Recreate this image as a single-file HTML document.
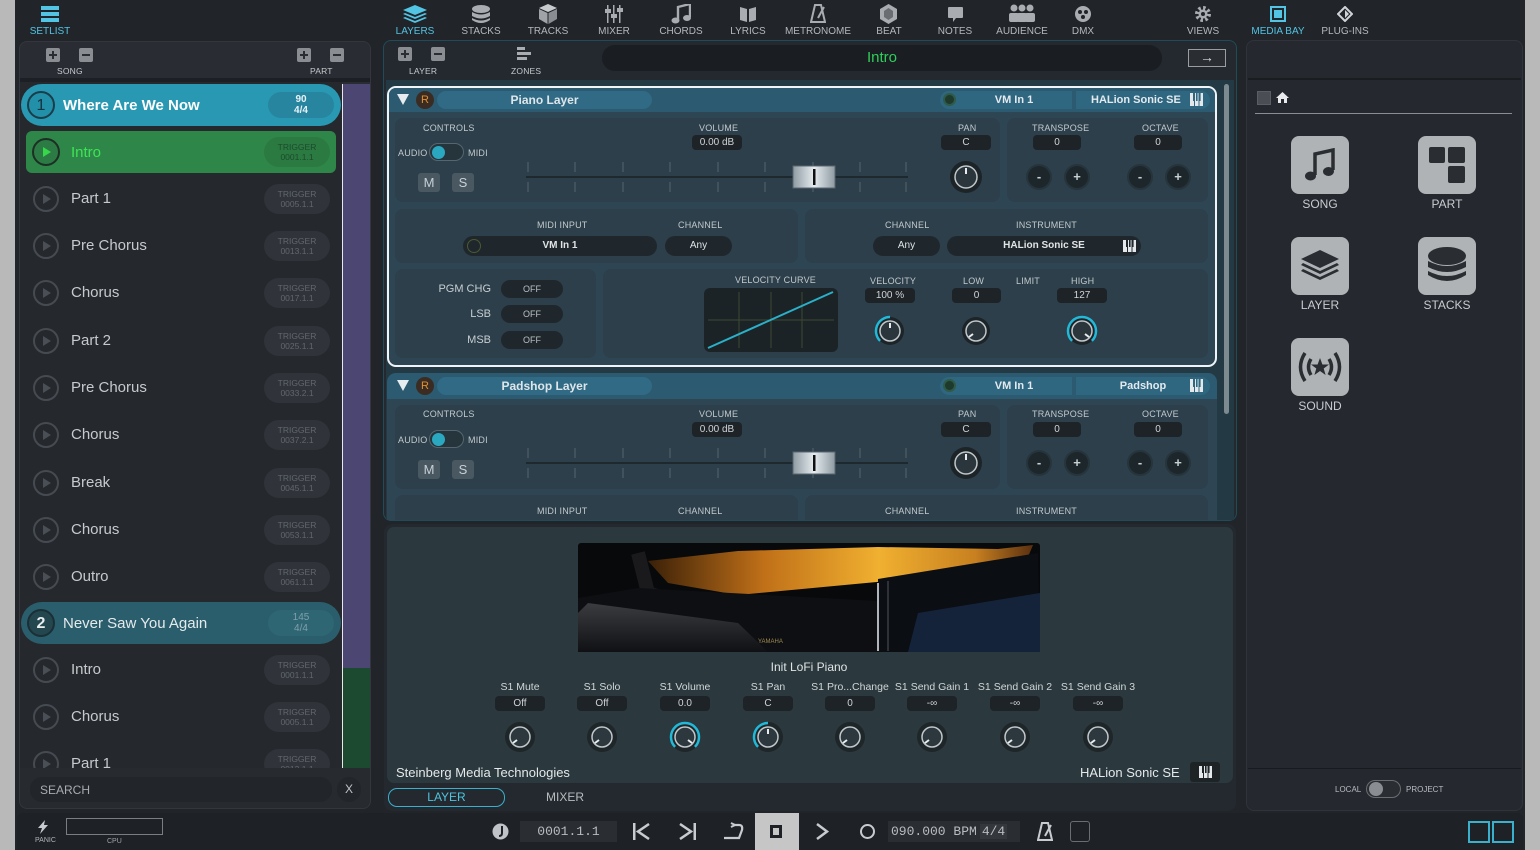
<!DOCTYPE html>
<html><head><meta charset="utf-8"><style>
*{margin:0;padding:0;box-sizing:border-box}
body{width:1540px;height:850px;overflow:hidden;background:#b9b9b9;font-family:"Liberation Sans",sans-serif;position:relative;color:#c8ccd0}
.a{position:absolute}
.c{position:absolute;text-align:center;white-space:nowrap}
.lbl{font-size:9px;color:#c3c9cd;letter-spacing:.2px}
.tb{font-size:10px;color:#b4b8bc;transform:translateX(-50%)}
.vb{position:absolute;background:#1d2327;border-radius:4px;font-size:10px;color:#d0d4d8;text-align:center}
.pill{position:absolute;background:#1f272c;border-radius:12px;font-size:10px;color:#e0e4e6;text-align:center}
.sec{position:absolute;background:#2c3f4b;border-radius:8px}
.row{position:absolute;left:26px;width:310px;height:42px}
.play{position:absolute;left:7px;top:8px;width:26px;height:26px;border:2px solid #464b51;border-radius:50%}
.play:after{content:"";position:absolute;left:8px;top:6px;border-left:8px solid #4a4f55;border-top:5px solid transparent;border-bottom:5px solid transparent}
.rn{position:absolute;left:45px;top:12px;font-size:15px;color:#c6cacd}
.trg{position:absolute;left:238px;top:6px;width:66px;height:30px;background:#30343a;border-radius:15px;font-size:8.5px;color:#62676d;text-align:center;line-height:10px;padding-top:5px}
.pm{position:absolute;width:22px;height:22px;border-radius:50%;background:#1d262b;box-shadow:0 0 0 2px #26343c;color:#c8d0d4;font-size:13px;text-align:center;line-height:21px;font-weight:bold}
.ms{position:absolute;width:22px;height:19px;background:#4a5862;border-radius:3px;color:#c8d0d6;font-size:13px;text-align:center;line-height:19px}
</style></head><body>

<div class="a" style="left:15px;top:0;width:1510px;height:850px;background:#212429"></div>

<!-- ================= LEFT PANEL ================= -->
<svg class="a" style="left:41px;top:6px" width="18" height="16"><rect x="0" y="0" width="18" height="4" fill="#52c4e4"/><rect x="0" y="6" width="18" height="4" fill="#52c4e4"/><rect x="0" y="12" width="18" height="4" fill="#52c4e4"/></svg>
<div class="c tb" style="left:50px;top:26px;color:#52c4e4">SETLIST</div>
<div class="a" style="left:19px;top:41px;width:352px;height:768px;background:#292c32;border-radius:8px;border:1px solid #33373d"></div>
<div class="a" style="left:20px;top:78px;width:350px;height:4px;background:#1c1f23"></div>
<svg class="a" style="left:46px;top:48px" width="48" height="14"><rect x="0" y="0" width="14" height="14" rx="2" fill="#8a8d91"/><rect x="3" y="6" width="8" height="2" fill="#2a2d31"/><rect x="6" y="3" width="2" height="8" fill="#2a2d31"/><rect x="33" y="0" width="14" height="14" rx="2" fill="#8a8d91"/><rect x="36" y="6" width="8" height="2" fill="#2a2d31"/></svg>
<div class="c lbl" style="left:57px;top:66px;font-size:8.5px">SONG</div>
<svg class="a" style="left:297px;top:48px" width="48" height="14"><rect x="0" y="0" width="14" height="14" rx="2" fill="#8a8d91"/><rect x="3" y="6" width="8" height="2" fill="#2a2d31"/><rect x="6" y="3" width="2" height="8" fill="#2a2d31"/><rect x="33" y="0" width="14" height="14" rx="2" fill="#8a8d91"/><rect x="36" y="6" width="8" height="2" fill="#2a2d31"/></svg>
<div class="c lbl" style="left:310px;top:66px;font-size:8.5px">PART</div>

<div class="a" style="left:20px;top:82px;width:322px;height:686px;background:#25282d"></div>
<div class="a" style="left:342px;top:84px;width:1px;height:684px;background:#e8e8e8"></div>
<div class="a" style="left:343px;top:84px;width:27px;height:584px;background:#4b4772"></div>
<div class="a" style="left:343px;top:668px;width:27px;height:100px;background:#1b4a30"></div>

<div class="a" style="left:21px;top:84px;width:320px;height:42px;background:#2898b3;border-radius:21px"></div>
<div class="a" style="left:27px;top:91px;width:28px;height:28px;border-radius:50%;border:2px solid #1b3d4a;background:#2390aa;color:#16323d;font-size:16px;text-align:center;line-height:25px">1</div>
<div class="a" style="left:63px;top:97px;font-size:15px;font-weight:bold;color:#fff">Where Are We Now</div>
<div class="a" style="left:268px;top:92px;width:66px;height:26px;background:#2785a0;border-radius:13px;font-size:10px;color:#e8f2f6;text-align:center;line-height:11px;padding-top:2px;font-weight:bold">90<br>4/4</div>

<div class="a" style="left:26px;top:131px;width:310px;height:42px;background:#2e8748;border-radius:6px"></div>
<div class="a" style="left:32px;top:138px;width:28px;height:28px;border-radius:50%;border:2px solid #1d2f24;background:#2c7a44"></div>
<div class="a" style="left:43px;top:147px;border-left:8px solid #36d84a;border-top:5px solid transparent;border-bottom:5px solid transparent"></div>
<div class="a" style="left:71px;top:144px;font-size:15px;color:#3ee454">Intro</div>
<div class="a" style="left:264px;top:137px;width:66px;height:30px;background:#2a7a42;border-radius:15px;font-size:8.5px;color:#1e4a2c;text-align:center;line-height:10px;padding-top:5px">TRIGGER<br>0001.1.1</div>

<div class="row" style="top:178px"><div class="play"></div><div class="rn">Part 1</div><div class="trg">TRIGGER<br>0005.1.1</div></div>
<div class="row" style="top:225px"><div class="play"></div><div class="rn">Pre Chorus</div><div class="trg">TRIGGER<br>0013.1.1</div></div>
<div class="row" style="top:272px"><div class="play"></div><div class="rn">Chorus</div><div class="trg">TRIGGER<br>0017.1.1</div></div>
<div class="row" style="top:320px"><div class="play"></div><div class="rn">Part 2</div><div class="trg">TRIGGER<br>0025.1.1</div></div>
<div class="row" style="top:367px"><div class="play"></div><div class="rn">Pre Chorus</div><div class="trg">TRIGGER<br>0033.2.1</div></div>
<div class="row" style="top:414px"><div class="play"></div><div class="rn">Chorus</div><div class="trg">TRIGGER<br>0037.2.1</div></div>
<div class="row" style="top:462px"><div class="play"></div><div class="rn">Break</div><div class="trg">TRIGGER<br>0045.1.1</div></div>
<div class="row" style="top:509px"><div class="play"></div><div class="rn">Chorus</div><div class="trg">TRIGGER<br>0053.1.1</div></div>
<div class="row" style="top:556px"><div class="play"></div><div class="rn">Outro</div><div class="trg">TRIGGER<br>0061.1.1</div></div>

<div class="a" style="left:21px;top:602px;width:320px;height:42px;background:#2b5e6c;border-radius:21px"></div>
<div class="a" style="left:27px;top:609px;width:28px;height:28px;border-radius:50%;border:2px solid #1b2f36;background:#24464f;color:#e8eef0;font-size:16px;text-align:center;line-height:25px;font-weight:bold">2</div>
<div class="a" style="left:63px;top:615px;font-size:15px;color:#e4eaec">Never Saw You Again</div>
<div class="a" style="left:268px;top:610px;width:66px;height:26px;background:#2f6674;border-radius:13px;font-size:10px;color:#7fa0aa;text-align:center;line-height:11px;padding-top:2px">145<br>4/4</div>

<div class="row" style="top:649px"><div class="play"></div><div class="rn">Intro</div><div class="trg">TRIGGER<br>0001.1.1</div></div>
<div class="row" style="top:696px"><div class="play"></div><div class="rn">Chorus</div><div class="trg">TRIGGER<br>0005.1.1</div></div>
<div class="a" style="left:26px;top:743px;width:310px;height:25px;overflow:hidden"><div class="row" style="left:0;top:0"><div class="play"></div><div class="rn">Part 1</div><div class="trg">TRIGGER<br>0013.1.1</div></div></div>

<div class="a" style="left:20px;top:768px;width:350px;height:40px;background:#272a2f;border-radius:0 0 8px 8px"></div>
<div class="a" style="left:30px;top:777px;width:302px;height:25px;background:#22252a;border-radius:12px;font-size:12px;color:#a8acb0;padding:6px 0 0 10px">SEARCH</div>
<div class="a" style="left:337px;top:777px;width:24px;height:25px;background:#22252a;border-radius:12px;font-size:12px;color:#c0c4c8;text-align:center;line-height:25px">X</div>

<!-- ================= TOP TOOLBAR ================= -->
<svg class="a" style="left:403px;top:5px" width="24" height="18"><path d="M12 0 L24 5 L12 10 L0 5Z" fill="#52c4e4"/><path d="M2 8 L12 12 L22 8 L24 9 L12 14 L0 9Z" fill="#52c4e4"/><path d="M2 12 L12 16 L22 12 L24 13 L12 18 L0 13Z" fill="#52c4e4"/></svg>
<div class="c tb" style="left:415px;top:26px;color:#52c4e4">LAYERS</div>
<svg class="a" style="left:472px;top:5px" width="18" height="19"><ellipse cx="9" cy="4" rx="9" ry="4" fill="#a9adb1"/><path d="M0 7 Q9 12 18 7 V11 Q9 16 0 11Z" fill="#a9adb1"/><path d="M0 13 Q9 18 18 13 V15 Q9 21 0 15Z" fill="#a9adb1"/></svg>
<div class="c tb" style="left:481px;top:26px">STACKS</div>
<svg class="a" style="left:539px;top:4px" width="18" height="20"><path d="M9 0 L18 4 L9 8 L0 4Z" fill="#c8cbce"/><path d="M0 5 L8.5 9 V20 L0 15Z" fill="#a0a4a8"/><path d="M18 5 L9.5 9 V20 L18 15Z" fill="#8a8e92"/></svg>
<div class="c tb" style="left:548px;top:26px">TRACKS</div>
<svg class="a" style="left:605px;top:5px" width="18" height="18"><g fill="#a9adb1"><rect x="2" y="0" width="1.5" height="18"/><rect x="8" y="0" width="1.5" height="18"/><rect x="14" y="0" width="1.5" height="18"/><rect x="0" y="4" width="6" height="4"/><rect x="6" y="9" width="6" height="4"/><rect x="12" y="3" width="6" height="4"/></g></svg>
<div class="c tb" style="left:614px;top:26px">MIXER</div>
<svg class="a" style="left:671px;top:4px" width="20" height="20"><path d="M7 16 V3 L19 0 V13" stroke="#a9adb1" stroke-width="2.4" fill="none"/><ellipse cx="4.5" cy="16.5" rx="4" ry="3" fill="#a9adb1"/><ellipse cx="16" cy="14" rx="4" ry="3" fill="#a9adb1"/></svg>
<div class="c tb" style="left:681px;top:26px">CHORDS</div>
<svg class="a" style="left:740px;top:6px" width="16" height="16"><path d="M0 1 L7 3 V16 L0 14Z M9 3 L16 1 V14 L9 16Z" fill="#a9adb1"/></svg>
<div class="c tb" style="left:748px;top:26px">LYRICS</div>
<svg class="a" style="left:810px;top:4px" width="16" height="19"><path d="M5 1 H11 L15 18 H1Z" stroke="#a9adb1" stroke-width="2" fill="none"/><path d="M8 14 L14 3" stroke="#a9adb1" stroke-width="2"/></svg>
<div class="c tb" style="left:818px;top:26px">METRONOME</div>
<svg class="a" style="left:880px;top:4px" width="17" height="20"><path d="M8.5 0 L17 5 V15 L8.5 20 L0 15 V5Z" fill="#a9adb1"/><path d="M8.5 4 L13 7 V13 L8.5 16 L4 13 V7Z" fill="#6a6e72"/></svg>
<div class="c tb" style="left:889px;top:26px">BEAT</div>
<svg class="a" style="left:948px;top:7px" width="15" height="15"><path d="M0 1 Q0 0 1 0 H14 Q15 0 15 1 V10 Q15 11 14 11 H8 L5 15 V11 H1 Q0 11 0 10Z" fill="#a9adb1"/></svg>
<div class="c tb" style="left:955px;top:26px">NOTES</div>
<svg class="a" style="left:1006px;top:4px" width="32" height="18"><g fill="#a9adb1"><circle cx="8" cy="4" r="3.5"/><circle cx="16" cy="4" r="3.5"/><circle cx="24" cy="4" r="3.5"/><rect x="3" y="9" width="10" height="9" rx="2"/><rect x="11" y="9" width="10" height="9" rx="2"/><rect x="19" y="9" width="10" height="9" rx="2"/></g></svg>
<div class="c tb" style="left:1022px;top:26px">AUDIENCE</div>
<svg class="a" style="left:1075px;top:6px" width="16" height="16"><circle cx="8" cy="8" r="8" fill="#a9adb1"/><circle cx="5" cy="6" r="2" fill="#212429"/><circle cx="11" cy="6" r="2" fill="#212429"/><circle cx="8" cy="11" r="2" fill="#212429"/></svg>
<div class="c tb" style="left:1083px;top:26px">DMX</div>
<svg class="a" style="left:1195px;top:6px" width="16" height="16"><circle cx="8" cy="8" r="6" fill="none" stroke="#a9adb1" stroke-width="4" stroke-dasharray="2.4 2.3"/><circle cx="8" cy="8" r="4.5" fill="#a9adb1"/><circle cx="8" cy="8" r="2" fill="#212429"/></svg>
<div class="c tb" style="left:1203px;top:26px">VIEWS</div>

<!-- ================= CENTER PANEL ================= -->
<div class="a" style="left:383px;top:40px;width:854px;height:481px;background:#23292e;border-radius:8px;border:1px solid #1f4c58"></div>
<svg class="a" style="left:398px;top:47px" width="48" height="14"><rect x="0" y="0" width="14" height="14" rx="2" fill="#8a8d91"/><rect x="3" y="6" width="8" height="2" fill="#2a2d31"/><rect x="6" y="3" width="2" height="8" fill="#2a2d31"/><rect x="33" y="0" width="14" height="14" rx="2" fill="#8a8d91"/><rect x="36" y="6" width="8" height="2" fill="#2a2d31"/></svg>
<div class="c lbl" style="left:409px;top:66px;font-size:8.5px">LAYER</div>
<svg class="a" style="left:517px;top:47px" width="14" height="14"><rect x="0" y="0" width="8" height="3" fill="#a9adb1"/><rect x="0" y="5" width="14" height="3" fill="#a9adb1"/><rect x="0" y="10" width="10" height="3" fill="#a9adb1"/></svg>
<div class="c lbl" style="left:511px;top:66px;font-size:8.5px">ZONES</div>
<div class="a" style="left:602px;top:45px;width:560px;height:26px;background:#1a1d21;border-radius:13px;font-size:15px;color:#2fcf5a;text-align:center;line-height:26px">Intro</div>
<div class="a" style="left:1188px;top:49px;width:38px;height:18px;border:1px solid #9a9ea2;background:#2a2d31;color:#d8dadc;font-size:14px;text-align:center;line-height:15px">→</div>
<div class="a" style="left:386px;top:80px;width:848px;height:440px;background:#233a44"></div>
<div class="a" style="left:1224px;top:84px;width:5px;height:330px;background:#7d8a90;border-radius:3px"></div>

<!-- PIANO LAYER -->
<div class="a" style="left:387px;top:86px;width:830px;height:281px;background:#2e4554;border:2px solid #f0f4f6;border-radius:9px"></div>
<div class="a" style="left:389px;top:88px;width:826px;height:24px;background:#2c5a70;border-radius:7px 7px 0 0"></div>
<div class="a" style="left:397px;top:94px;border-top:11px solid #e6ecef;border-left:6px solid transparent;border-right:6px solid transparent"></div>
<div class="a" style="left:416px;top:91px;width:18px;height:18px;border-radius:50%;background:#3a2c22;color:#e09030;font-size:11px;text-align:center;line-height:18px">R</div>
<div class="a" style="left:437px;top:91px;width:215px;height:18px;background:#306a84;border-radius:9px;font-size:12px;font-weight:bold;color:#dfe6ea;text-align:center;line-height:18px">Piano Layer</div>
<div class="a" style="left:940px;top:91px;width:132px;height:18px;background:#2f6680;border-radius:9px 0 0 9px;font-size:11px;font-weight:bold;color:#e4eaee;text-align:center;line-height:18px;padding-left:16px">VM In 1</div>
<div class="a" style="left:943px;top:93px;width:13px;height:13px;border-radius:50%;background:#1e3a2c;border:2px solid #2f5a48"></div>
<div class="a" style="left:1076px;top:91px;width:134px;height:18px;background:#2f6680;border-radius:0 9px 9px 0;font-size:11px;font-weight:bold;color:#e4eaee;line-height:18px;padding-left:15px">HALion Sonic SE</div>
<svg class="a" style="left:1190px;top:93px" width="13" height="13"><rect width="13" height="13" fill="#e4e8ea"/><rect x="3" y="0" width="1.6" height="8" fill="#2f6680"/><rect x="6" y="0" width="1.6" height="8" fill="#2f6680"/><rect x="9" y="0" width="1.6" height="8" fill="#2f6680"/><rect x="4" y="0" width="1" height="13" fill="#2f6680"/><rect x="8.5" y="0" width="1" height="13" fill="#2f6680"/></svg>

<div class="sec" style="left:395px;top:118px;width:605px;height:84px"></div>
<div class="sec" style="left:1007px;top:118px;width:201px;height:84px"></div>
<div class="c lbl" style="left:423px;top:123px">CONTROLS</div>
<div class="c lbl" style="left:398px;top:148px">AUDIO</div>
<div class="a" style="left:429px;top:143px;width:35px;height:18px;border:1.5px solid #556670;border-radius:9px;background:#26343c"></div>
<div class="a" style="left:432px;top:146px;width:13px;height:13px;border-radius:50%;background:#2aa8c0"></div>
<div class="c lbl" style="left:468px;top:148px">MIDI</div>
<div class="ms" style="left:418px;top:173px">M</div>
<div class="ms" style="left:452px;top:173px">S</div>
<div class="c lbl" style="left:699px;top:123px">VOLUME</div>
<div class="vb" style="left:692px;top:135px;width:50px;height:15px;line-height:15px">0.00 dB</div>
<svg class="a" style="left:524px;top:160px" width="386" height="36"><line x1="2" y1="17" x2="384" y2="17" stroke="#141b1f" stroke-width="1.2"/><g stroke="#56656e" stroke-width="1"><line x1="4" y1="2" x2="4" y2="12"/><line x1="4" y1="22" x2="4" y2="32"/><line x1="51" y1="2" x2="51" y2="12"/><line x1="51" y1="22" x2="51" y2="32"/><line x1="99" y1="2" x2="99" y2="12"/><line x1="99" y1="22" x2="99" y2="32"/><line x1="146" y1="2" x2="146" y2="12"/><line x1="146" y1="22" x2="146" y2="32"/><line x1="194" y1="2" x2="194" y2="12"/><line x1="194" y1="22" x2="194" y2="32"/><line x1="241" y1="2" x2="241" y2="12"/><line x1="241" y1="22" x2="241" y2="32"/><line x1="289" y1="2" x2="289" y2="12"/><line x1="289" y1="22" x2="289" y2="32"/><line x1="336" y1="2" x2="336" y2="12"/><line x1="336" y1="22" x2="336" y2="32"/><line x1="382" y1="2" x2="382" y2="12"/><line x1="382" y1="22" x2="382" y2="32"/></g><defs><linearGradient id="fg" x1="0" x2="1"><stop offset="0" stop-color="#8e9aa2"/><stop offset=".5" stop-color="#e6ecef"/><stop offset="1" stop-color="#8e9aa2"/></linearGradient></defs><rect x="269" y="6" width="42" height="22" fill="url(#fg)" stroke="#5a666e"/><rect x="289" y="9" width="2.5" height="16" fill="#111"/></svg>
<div class="c lbl" style="left:958px;top:123px">PAN</div>
<div class="vb" style="left:941px;top:135px;width:50px;height:15px;line-height:15px">C</div>
<svg class="a" style="left:949px;top:160px" width="34" height="34"><circle cx="17" cy="17" r="16" fill="#1c2428"/><circle cx="17" cy="17" r="11" fill="#2a363c" stroke="#c0c8cc" stroke-width="1.5"/><line x1="17" y1="8" x2="17" y2="14" stroke="#e8ecee" stroke-width="2"/></svg>
<div class="c lbl" style="left:1032px;top:123px">TRANSPOSE</div>
<div class="vb" style="left:1033px;top:135px;width:48px;height:15px;line-height:15px">0</div>
<div class="c lbl" style="left:1142px;top:123px">OCTAVE</div>
<div class="vb" style="left:1134px;top:135px;width:48px;height:15px;line-height:15px">0</div>
<div class="pm" style="left:1028px;top:166px">-</div><div class="pm" style="left:1066px;top:166px">+</div>
<div class="pm" style="left:1129px;top:166px">-</div><div class="pm" style="left:1167px;top:166px">+</div>

<div class="sec" style="left:395px;top:209px;width:403px;height:54px"></div>
<div class="sec" style="left:805px;top:209px;width:403px;height:54px"></div>
<div class="c lbl" style="left:537px;top:220px">MIDI INPUT</div>
<div class="c lbl" style="left:678px;top:220px">CHANNEL</div>
<div class="pill" style="left:463px;top:236px;width:194px;height:20px;line-height:20px;font-weight:bold">VM In 1</div>
<div class="a" style="left:467px;top:239px;width:14px;height:14px;border-radius:50%;border:1.5px solid #4a5a30"></div>
<div class="pill" style="left:665px;top:236px;width:67px;height:20px;line-height:20px">Any</div>
<div class="c lbl" style="left:885px;top:220px">CHANNEL</div>
<div class="c lbl" style="left:1016px;top:220px">INSTRUMENT</div>
<div class="pill" style="left:873px;top:236px;width:67px;height:20px;line-height:20px">Any</div>
<div class="pill" style="left:947px;top:236px;width:194px;height:20px;line-height:20px;font-weight:bold">HALion Sonic SE</div>
<svg class="a" style="left:1123px;top:240px" width="13" height="12"><rect width="13" height="12" fill="#e4e8ea"/><rect x="3" y="0" width="1.6" height="7" fill="#1f272c"/><rect x="6" y="0" width="1.6" height="7" fill="#1f272c"/><rect x="9" y="0" width="1.6" height="7" fill="#1f272c"/><rect x="4" y="0" width="1" height="12" fill="#1f272c"/><rect x="8.5" y="0" width="1" height="12" fill="#1f272c"/></svg>

<div class="sec" style="left:395px;top:269px;width:201px;height:89px"></div>
<div class="sec" style="left:603px;top:269px;width:605px;height:89px"></div>
<div class="a" style="left:430px;top:283px;width:61px;text-align:right;font-size:11px;color:#c8ced2">PGM CHG</div>
<div class="a" style="left:430px;top:308px;width:61px;text-align:right;font-size:11px;color:#c8ced2">LSB</div>
<div class="a" style="left:430px;top:334px;width:61px;text-align:right;font-size:11px;color:#c8ced2">MSB</div>
<div class="pill" style="left:501px;top:280px;width:62px;height:18px;line-height:18px;font-size:9px;color:#b8c0c4">OFF</div>
<div class="pill" style="left:501px;top:305px;width:62px;height:18px;line-height:18px;font-size:9px;color:#b8c0c4">OFF</div>
<div class="pill" style="left:501px;top:331px;width:62px;height:18px;line-height:18px;font-size:9px;color:#b8c0c4">OFF</div>
<div class="c lbl" style="left:735px;top:275px">VELOCITY CURVE</div>
<svg class="a" style="left:704px;top:288px" width="134" height="64"><rect width="134" height="64" rx="6" fill="#1c2327"/><g stroke="#3c4a30" stroke-width="1"><line x1="35" y1="4" x2="35" y2="60"/><line x1="67" y1="4" x2="67" y2="60"/><line x1="98" y1="4" x2="98" y2="60"/><line x1="4" y1="32" x2="130" y2="32"/></g><line x1="4" y1="60" x2="129" y2="4" stroke="#2ab0c8" stroke-width="2"/></svg>
<div class="c lbl" style="left:870px;top:276px">VELOCITY</div>
<div class="vb" style="left:865px;top:288px;width:50px;height:15px;line-height:15px">100 %</div>
<div class="c lbl" style="left:963px;top:276px">LOW</div>
<div class="vb" style="left:952px;top:288px;width:49px;height:15px;line-height:15px">0</div>
<div class="c lbl" style="left:1016px;top:276px">LIMIT</div>
<div class="c lbl" style="left:1071px;top:276px">HIGH</div>
<div class="vb" style="left:1057px;top:288px;width:50px;height:15px;line-height:15px">127</div>
<svg class="a" style="left:872px;top:313px" width="36" height="36"><circle cx="18" cy="18" r="14" fill="#1c2428"/><path d="M8.1 27.9 A14 14 0 0 1 18 4" stroke="#22b8d8" stroke-width="2.5" fill="none"/><circle cx="18" cy="18" r="10" fill="#2a363c" stroke="#c0c8cc" stroke-width="1.5"/><line x1="18" y1="10" x2="18" y2="15" stroke="#e8ecee" stroke-width="2"/></svg>
<svg class="a" style="left:958px;top:313px" width="36" height="36"><circle cx="18" cy="18" r="14" fill="#1c2428"/><circle cx="18" cy="18" r="10" fill="#2a363c" stroke="#c0c8cc" stroke-width="1.5"/><line x1="15" y1="21" x2="11" y2="24" stroke="#e8ecee" stroke-width="2"/></svg>
<svg class="a" style="left:1064px;top:313px" width="36" height="36"><circle cx="18" cy="18" r="14" fill="#1c2428"/><path d="M8.1 27.9 A14 14 0 1 1 27.9 27.9" stroke="#22b8d8" stroke-width="2.5" fill="none"/><circle cx="18" cy="18" r="10" fill="#2a363c" stroke="#c0c8cc" stroke-width="1.5"/><line x1="21" y1="21" x2="25" y2="24" stroke="#e8ecee" stroke-width="2"/></svg>

<!-- PADSHOP LAYER -->
<div class="a" style="left:387px;top:373px;width:830px;height:147px;background:#2e4554;border-radius:9px 9px 0 0;overflow:hidden">
<div class="a" style="left:0;top:0;width:830px;height:26px;background:#2c5a70"></div>
<div class="a" style="left:10px;top:7px;border-top:11px solid #e6ecef;border-left:6px solid transparent;border-right:6px solid transparent"></div>
<div class="a" style="left:29px;top:4px;width:18px;height:18px;border-radius:50%;background:#3a2c22;color:#e09030;font-size:11px;text-align:center;line-height:18px">R</div>
<div class="a" style="left:50px;top:4px;width:215px;height:18px;background:#306a84;border-radius:9px;font-size:12px;font-weight:bold;color:#dfe6ea;text-align:center;line-height:18px">Padshop Layer</div>
<div class="a" style="left:553px;top:4px;width:132px;height:18px;background:#2f6680;border-radius:9px 0 0 9px;font-size:11px;font-weight:bold;color:#e4eaee;text-align:center;line-height:18px;padding-left:16px">VM In 1</div>
<div class="a" style="left:556px;top:6px;width:13px;height:13px;border-radius:50%;background:#1e3a2c;border:2px solid #2f5a48"></div>
<div class="a" style="left:689px;top:4px;width:134px;height:18px;background:#2f6680;border-radius:0 9px 9px 0;font-size:11px;font-weight:bold;color:#e4eaee;line-height:18px;text-align:center">Padshop</div>
<svg class="a" style="left:803px;top:6px" width="13" height="13"><rect width="13" height="13" fill="#e4e8ea"/><rect x="4" y="0" width="1" height="13" fill="#2f6680"/><rect x="8.5" y="0" width="1" height="13" fill="#2f6680"/><rect x="3" y="0" width="1.6" height="8" fill="#2f6680"/><rect x="6" y="0" width="1.6" height="8" fill="#2f6680"/><rect x="9" y="0" width="1.6" height="8" fill="#2f6680"/></svg>
<div class="sec" style="left:8px;top:32px;width:605px;height:84px"></div>
<div class="sec" style="left:620px;top:32px;width:201px;height:84px"></div>
<div class="c lbl" style="left:36px;top:36px">CONTROLS</div>
<div class="c lbl" style="left:11px;top:62px">AUDIO</div>
<div class="a" style="left:42px;top:57px;width:35px;height:18px;border:1.5px solid #556670;border-radius:9px;background:#26343c"></div>
<div class="a" style="left:45px;top:60px;width:13px;height:13px;border-radius:50%;background:#2aa8c0"></div>
<div class="c lbl" style="left:81px;top:62px">MIDI</div>
<div class="ms" style="left:31px;top:87px">M</div>
<div class="ms" style="left:65px;top:87px">S</div>
<div class="c lbl" style="left:312px;top:36px">VOLUME</div>
<div class="vb" style="left:305px;top:49px;width:50px;height:15px;line-height:15px">0.00 dB</div>
<svg class="a" style="left:137px;top:73px" width="386" height="36"><line x1="2" y1="17" x2="384" y2="17" stroke="#141b1f" stroke-width="1.2"/><g stroke="#56656e" stroke-width="1"><line x1="4" y1="2" x2="4" y2="12"/><line x1="4" y1="22" x2="4" y2="32"/><line x1="51" y1="2" x2="51" y2="12"/><line x1="51" y1="22" x2="51" y2="32"/><line x1="99" y1="2" x2="99" y2="12"/><line x1="99" y1="22" x2="99" y2="32"/><line x1="146" y1="2" x2="146" y2="12"/><line x1="146" y1="22" x2="146" y2="32"/><line x1="194" y1="2" x2="194" y2="12"/><line x1="194" y1="22" x2="194" y2="32"/><line x1="241" y1="2" x2="241" y2="12"/><line x1="241" y1="22" x2="241" y2="32"/><line x1="289" y1="2" x2="289" y2="12"/><line x1="289" y1="22" x2="289" y2="32"/><line x1="336" y1="2" x2="336" y2="12"/><line x1="336" y1="22" x2="336" y2="32"/><line x1="382" y1="2" x2="382" y2="12"/><line x1="382" y1="22" x2="382" y2="32"/></g><rect x="269" y="6" width="42" height="22" fill="url(#fg)" stroke="#5a666e"/><rect x="289" y="9" width="2.5" height="16" fill="#111"/></svg>
<div class="c lbl" style="left:571px;top:36px">PAN</div>
<div class="vb" style="left:554px;top:49px;width:50px;height:15px;line-height:15px">C</div>
<svg class="a" style="left:562px;top:73px" width="34" height="34"><circle cx="17" cy="17" r="16" fill="#1c2428"/><circle cx="17" cy="17" r="11" fill="#2a363c" stroke="#c0c8cc" stroke-width="1.5"/><line x1="17" y1="8" x2="17" y2="14" stroke="#e8ecee" stroke-width="2"/></svg>
<div class="c lbl" style="left:645px;top:36px">TRANSPOSE</div>
<div class="vb" style="left:646px;top:49px;width:48px;height:15px;line-height:15px">0</div>
<div class="c lbl" style="left:755px;top:36px">OCTAVE</div>
<div class="vb" style="left:747px;top:49px;width:48px;height:15px;line-height:15px">0</div>
<div class="pm" style="left:641px;top:79px">-</div><div class="pm" style="left:679px;top:79px">+</div>
<div class="pm" style="left:742px;top:79px">-</div><div class="pm" style="left:780px;top:79px">+</div>
<div class="sec" style="left:8px;top:122px;width:403px;height:54px"></div>
<div class="sec" style="left:418px;top:122px;width:403px;height:54px"></div>
<div class="c lbl" style="left:150px;top:133px">MIDI INPUT</div>
<div class="c lbl" style="left:291px;top:133px">CHANNEL</div>
<div class="c lbl" style="left:498px;top:133px">CHANNEL</div>
<div class="c lbl" style="left:629px;top:133px">INSTRUMENT</div>
</div>

<!-- ================= LOWER PANEL ================= -->
<div class="a" style="left:384px;top:524px;width:852px;height:287px;background:#23292e;border-radius:8px"></div>
<div class="a" style="left:387px;top:527px;width:846px;height:256px;background:#2b393e;border-radius:7px"></div>
<svg class="a" style="left:578px;top:543px" width="462" height="109"><defs><linearGradient id="pg" x1="0" y1="0" x2="1" y2="0"><stop offset="0" stop-color="#3a2008"/><stop offset=".3" stop-color="#c07018"/><stop offset=".6" stop-color="#f0b030"/><stop offset=".85" stop-color="#c88020"/><stop offset="1" stop-color="#5a3010"/></linearGradient><linearGradient id="kb" x1="0" y1="0" x2="0" y2="1"><stop offset="0" stop-color="#3a3c40"/><stop offset="1" stop-color="#101114"/></linearGradient></defs><rect width="462" height="109" rx="3" fill="#07090b"/><path d="M70 18 L160 8 L300 4 L420 6 L455 2 L450 14 L330 36 L160 52 L90 40Z" fill="url(#pg)"/><path d="M60 10 L70 50 L100 60" stroke="#1a1a1c" stroke-width="14" fill="none"/><path d="M0 55 L60 45 L300 58 L300 109 L0 109Z" fill="#0d0f12"/><path d="M10 60 L160 80 L190 109 L0 109 L0 70Z" fill="url(#kb)"/><path d="M300 36 L460 10 L462 109 L300 109Z" fill="#0b0e13"/><path d="M340 70 L462 50 L462 109 L330 109Z" fill="#15233a"/><line x1="300" y1="40" x2="300" y2="108" stroke="#b0b6bc" stroke-width="2"/><line x1="310" y1="38" x2="310" y2="108" stroke="#50565c" stroke-width="1"/><text x="180" y="100" font-size="6" fill="#a08a50" font-family="Liberation Sans">YAMAHA</text></svg>
<div class="c" style="left:809px;top:660px;transform:translateX(-50%);font-size:12px;color:#e0e4e6">Init LoFi Piano</div>

<div class="c" style="left:520px;top:681px;transform:translateX(-50%);font-size:10.5px;color:#d0d6d8">S1 Mute</div>
<div class="c" style="left:602px;top:681px;transform:translateX(-50%);font-size:10.5px;color:#d0d6d8">S1 Solo</div>
<div class="c" style="left:685px;top:681px;transform:translateX(-50%);font-size:10.5px;color:#d0d6d8">S1 Volume</div>
<div class="c" style="left:768px;top:681px;transform:translateX(-50%);font-size:10.5px;color:#d0d6d8">S1 Pan</div>
<div class="c" style="left:850px;top:681px;transform:translateX(-50%);font-size:10.5px;color:#d0d6d8">S1 Pro...Change</div>
<div class="c" style="left:932px;top:681px;transform:translateX(-50%);font-size:10.5px;color:#d0d6d8">S1 Send Gain 1</div>
<div class="c" style="left:1015px;top:681px;transform:translateX(-50%);font-size:10.5px;color:#d0d6d8">S1 Send Gain 2</div>
<div class="c" style="left:1098px;top:681px;transform:translateX(-50%);font-size:10.5px;color:#d0d6d8">S1 Send Gain 3</div>
<div class="vb" style="left:495px;top:696px;width:50px;height:15px;line-height:15px">Off</div>
<div class="vb" style="left:577px;top:696px;width:50px;height:15px;line-height:15px">Off</div>
<div class="vb" style="left:660px;top:696px;width:50px;height:15px;line-height:15px">0.0</div>
<div class="vb" style="left:743px;top:696px;width:50px;height:15px;line-height:15px">C</div>
<div class="vb" style="left:825px;top:696px;width:50px;height:15px;line-height:15px">0</div>
<div class="vb" style="left:907px;top:696px;width:50px;height:15px;line-height:15px">-∞</div>
<div class="vb" style="left:990px;top:696px;width:50px;height:15px;line-height:15px">-∞</div>
<div class="vb" style="left:1073px;top:696px;width:50px;height:15px;line-height:15px">-∞</div>
<svg class="a" style="left:502px;top:719px" width="36" height="36"><circle cx="18" cy="18" r="15" fill="#1e2629"/><circle cx="18" cy="18" r="10" fill="#2c383d" stroke="#c0c8cc" stroke-width="1.5"/><line x1="15" y1="21" x2="11" y2="24" stroke="#e8ecee" stroke-width="2"/></svg>
<svg class="a" style="left:584px;top:719px" width="36" height="36"><circle cx="18" cy="18" r="15" fill="#1e2629"/><circle cx="18" cy="18" r="10" fill="#2c383d" stroke="#c0c8cc" stroke-width="1.5"/><line x1="15" y1="21" x2="11" y2="24" stroke="#e8ecee" stroke-width="2"/></svg>
<svg class="a" style="left:667px;top:719px" width="36" height="36"><circle cx="18" cy="18" r="15" fill="#1e2629"/><path d="M8.1 27.9 A14 14 0 1 1 27.9 27.9" stroke="#22b8d8" stroke-width="2.5" fill="none"/><circle cx="18" cy="18" r="10" fill="#2c383d" stroke="#c0c8cc" stroke-width="1.5"/><line x1="21" y1="21" x2="25" y2="24" stroke="#e8ecee" stroke-width="2"/></svg>
<svg class="a" style="left:750px;top:719px" width="36" height="36"><circle cx="18" cy="18" r="15" fill="#1e2629"/><path d="M8.1 27.9 A14 14 0 0 1 18 4" stroke="#22b8d8" stroke-width="2.5" fill="none"/><circle cx="18" cy="18" r="10" fill="#2c383d" stroke="#c0c8cc" stroke-width="1.5"/><line x1="18" y1="10" x2="18" y2="15" stroke="#e8ecee" stroke-width="2"/></svg>
<svg class="a" style="left:832px;top:719px" width="36" height="36"><circle cx="18" cy="18" r="15" fill="#1e2629"/><circle cx="18" cy="18" r="10" fill="#2c383d" stroke="#c0c8cc" stroke-width="1.5"/><line x1="15" y1="21" x2="11" y2="24" stroke="#e8ecee" stroke-width="2"/></svg>
<svg class="a" style="left:914px;top:719px" width="36" height="36"><circle cx="18" cy="18" r="15" fill="#1e2629"/><circle cx="18" cy="18" r="10" fill="#2c383d" stroke="#c0c8cc" stroke-width="1.5"/><line x1="15" y1="21" x2="11" y2="24" stroke="#e8ecee" stroke-width="2"/></svg>
<svg class="a" style="left:997px;top:719px" width="36" height="36"><circle cx="18" cy="18" r="15" fill="#1e2629"/><circle cx="18" cy="18" r="10" fill="#2c383d" stroke="#c0c8cc" stroke-width="1.5"/><line x1="15" y1="21" x2="11" y2="24" stroke="#e8ecee" stroke-width="2"/></svg>
<svg class="a" style="left:1080px;top:719px" width="36" height="36"><circle cx="18" cy="18" r="15" fill="#1e2629"/><circle cx="18" cy="18" r="10" fill="#2c383d" stroke="#c0c8cc" stroke-width="1.5"/><line x1="15" y1="21" x2="11" y2="24" stroke="#e8ecee" stroke-width="2"/></svg>
<div class="a" style="left:396px;top:765px;font-size:13px;color:#e4e8ea">Steinberg Media Technologies</div>
<div class="a" style="left:1080px;top:765px;font-size:13px;color:#e4e8ea">HALion Sonic SE</div>
<div class="a" style="left:1190px;top:762px;width:30px;height:20px;background:#1e2326;border-radius:3px"></div>
<svg class="a" style="left:1199px;top:766px" width="13" height="12"><rect width="13" height="12" fill="#e4e8ea"/><rect x="4" y="0" width="1" height="12" fill="#1e2326"/><rect x="8.5" y="0" width="1" height="12" fill="#1e2326"/><rect x="3" y="0" width="1.6" height="7" fill="#1e2326"/><rect x="6" y="0" width="1.6" height="7" fill="#1e2326"/><rect x="9" y="0" width="1.6" height="7" fill="#1e2326"/></svg>
<div class="a" style="left:388px;top:788px;width:117px;height:19px;border:1px solid #3ab0cc;border-radius:9px;font-size:12px;color:#4ec3e0;text-align:center;line-height:17px">LAYER</div>
<div class="a" style="left:546px;top:790px;font-size:12px;color:#b8bcc0">MIXER</div>

<!-- ================= RIGHT PANEL ================= -->
<svg class="a" style="left:1270px;top:6px" width="16" height="16"><rect x="1" y="1" width="14" height="14" fill="none" stroke="#52c4e4" stroke-width="2"/><rect x="4" y="4" width="8" height="8" fill="#52c4e4"/></svg>
<div class="c tb" style="left:1278px;top:26px;color:#52c4e4">MEDIA BAY</div>
<svg class="a" style="left:1337px;top:6px" width="16" height="16"><path d="M8 1 L15 8 L8 15 L1 8Z" fill="none" stroke="#d0d4d8" stroke-width="2"/><path d="M8 4 L12 8 L8 12Z" fill="#d0d4d8"/></svg>
<div class="c tb" style="left:1345px;top:26px">PLUG-INS</div>
<div class="a" style="left:1246px;top:40px;width:277px;height:771px;background:#25282e;border-radius:8px;border:1px solid #30343a"></div>
<div class="a" style="left:1248px;top:78px;width:273px;height:2px;background:#1a1c20"></div>
<div class="a" style="left:1257px;top:91px;width:14px;height:14px;background:#4a4e54;border:1px solid #5a5e64"></div>
<svg class="a" style="left:1276px;top:92px" width="13" height="11"><path d="M6.5 0 L13 6 H11 V11 H8 V7 H5 V11 H2 V6 H0Z" fill="#e8eaec"/></svg>
<div class="a" style="left:1255px;top:113px;width:257px;height:1px;background:#8a8e92"></div>

<div class="a" style="left:1291px;top:136px;width:58px;height:58px;background:#b0b3b6;border-radius:8px"></div>
<svg class="a" style="left:1304px;top:148px" width="32" height="34"><path d="M11 27 V6 L29 2 V22" stroke="#2a2d31" stroke-width="3.5" fill="none"/><ellipse cx="6.5" cy="28" rx="5.5" ry="4.5" fill="#2a2d31"/><ellipse cx="24.5" cy="23.5" rx="5.5" ry="4.5" fill="#2a2d31"/></svg>
<div class="c" style="left:1320px;top:197px;transform:translateX(-50%);font-size:12px;color:#c8ccd0">SONG</div>
<div class="a" style="left:1418px;top:136px;width:58px;height:58px;background:#b0b3b6;border-radius:8px"></div>
<svg class="a" style="left:1429px;top:147px" width="36" height="36"><rect x="0" y="0" width="16" height="16" rx="2" fill="#2a2d31"/><rect x="19" y="0" width="17" height="16" rx="2" fill="#2a2d31"/><rect x="19" y="19" width="17" height="17" rx="2" fill="#2a2d31"/></svg>
<div class="c" style="left:1447px;top:197px;transform:translateX(-50%);font-size:12px;color:#c8ccd0">PART</div>
<div class="a" style="left:1291px;top:237px;width:58px;height:58px;background:#b0b3b6;border-radius:8px"></div>
<svg class="a" style="left:1300px;top:250px" width="40" height="32"><path d="M20 0 L39 9 L20 18 L1 9Z" fill="#2a2d31"/><path d="M3 13 L20 21 L37 13 L39 15 L20 24 L1 15Z" fill="#2a2d31"/><path d="M3 19 L20 27 L37 19 L39 21 L20 30 L1 21Z" fill="#2a2d31"/></svg>
<div class="c" style="left:1320px;top:298px;transform:translateX(-50%);font-size:12px;color:#c8ccd0">LAYER</div>
<div class="a" style="left:1418px;top:237px;width:58px;height:58px;background:#b0b3b6;border-radius:8px"></div>
<svg class="a" style="left:1427px;top:247px" width="40" height="38"><ellipse cx="20" cy="9" rx="19" ry="9" fill="#2a2d31"/><path d="M1 14 Q20 24 39 14 V20 Q20 30 1 20Z" fill="#2a2d31"/><path d="M1 24 Q20 34 39 24 V28 Q20 40 1 28Z" fill="#2a2d31"/></svg>
<div class="c" style="left:1447px;top:298px;transform:translateX(-50%);font-size:12px;color:#c8ccd0">STACKS</div>
<div class="a" style="left:1291px;top:338px;width:58px;height:58px;background:#b0b3b6;border-radius:8px"></div>
<svg class="a" style="left:1296px;top:349px" width="48" height="36"><g stroke="#2a2d31" stroke-width="3.5" fill="none"><path d="M9 4 Q0 18 9 32"/><path d="M39 4 Q48 18 39 32"/><path d="M15 10 Q10 18 15 26"/><path d="M33 10 Q38 18 33 26"/></g><path d="M24 9 L26.4 15.5 L33 15.5 L27.7 19.5 L29.6 26 L24 22 L18.4 26 L20.3 19.5 L15 15.5 L21.6 15.5Z" fill="#2a2d31"/></svg>
<div class="c" style="left:1320px;top:399px;transform:translateX(-50%);font-size:12px;color:#c8ccd0">SOUND</div>

<div class="a" style="left:1248px;top:768px;width:273px;height:1px;background:#181a1e"></div>
<div class="a" style="left:1335px;top:785px;font-size:8px;color:#b8bcc0">LOCAL</div>
<div class="a" style="left:1366px;top:780px;width:35px;height:18px;border:1.5px solid #6a6e72;border-radius:9px;background:#2a2d31"></div>
<div class="a" style="left:1369px;top:782px;width:14px;height:14px;border-radius:50%;background:#8a8e92"></div>
<div class="a" style="left:1406px;top:785px;font-size:8px;color:#b8bcc0">PROJECT</div>

<!-- ================= BOTTOM BAR ================= -->
<div class="a" style="left:17px;top:813px;width:1506px;height:37px;background:#1e2125;border-radius:6px 6px 0 0"></div>
<svg class="a" style="left:37px;top:820px" width="12" height="14"><path d="M8 0 L1 8 H5 L3 14 L11 5 H7Z" fill="#c8ccd0"/></svg>
<div class="c" style="left:35px;top:837px;font-size:7px;color:#b0b4b8">PANIC</div>
<div class="a" style="left:66px;top:818px;width:97px;height:17px;border:1.5px solid #7a7e82"></div>
<div class="c" style="left:107px;top:838px;font-size:7px;color:#a0a4a8">CPU</div>
<svg class="a" style="left:492px;top:823px" width="17" height="17"><circle cx="8.5" cy="8.5" r="8" fill="#c0c4c8"/><path d="M10 3 V10 Q10 13 7 13" stroke="#1e2125" stroke-width="2" fill="none"/></svg>
<div class="a" style="left:520px;top:821px;width:97px;height:21px;background:#2a2e33;font-family:'Liberation Mono',monospace;font-size:13px;color:#b8bcc0;text-align:center;line-height:21px">0001.1.1</div>
<svg class="a" style="left:632px;top:823px" width="18" height="17"><rect x="1" y="0" width="2.5" height="17" fill="#c8ccd0"/><path d="M17 1 L6 8.5 L17 16" stroke="#c8ccd0" stroke-width="2.5" fill="none"/></svg>
<svg class="a" style="left:679px;top:823px" width="18" height="17"><rect x="14.5" y="0" width="2.5" height="17" fill="#c8ccd0"/><path d="M1 1 L12 8.5 L1 16" stroke="#c8ccd0" stroke-width="2.5" fill="none"/></svg>
<svg class="a" style="left:722px;top:822px" width="22" height="18"><path d="M12 3 H17 Q21 3 20 8 L17 16 H2" stroke="#c8ccd0" stroke-width="2.2" fill="none"/><path d="M9 1 L13 3 L9 5" stroke="#c8ccd0" stroke-width="2" fill="none"/></svg>
<div class="a" style="left:755px;top:813px;width:44px;height:37px;background:#c6c6c6"></div>
<div class="a" style="left:770px;top:825px;width:12px;height:13px;background:#1e2125"></div>
<div class="a" style="left:773px;top:828px;width:6px;height:7px;background:#c6c6c6"></div>
<svg class="a" style="left:815px;top:823px" width="14" height="17"><path d="M2 1 L12 8.5 L2 16" stroke="#c8ccd0" stroke-width="2.5" fill="none"/></svg>
<div class="a" style="left:860px;top:824px;width:15px;height:15px;border:2.5px solid #c8ccd0;border-radius:50%"></div>
<div class="a" style="left:888px;top:821px;width:132px;height:21px;background:#2a2e33;font-family:'Liberation Mono',monospace;font-size:13px;color:#b8bcc0;line-height:21px;padding-left:3px">090.000 BPM<span style="display:inline-block;width:3px"></span><span style="background:#34383d;padding:0 2px">4/4</span></div>
<svg class="a" style="left:1037px;top:822px" width="16" height="19"><path d="M5 1 H11 L15 18 H1Z" stroke="#c8ccd0" stroke-width="2" fill="none"/><path d="M8 14 L14 3" stroke="#c8ccd0" stroke-width="2"/></svg>
<div class="a" style="left:1070px;top:821px;width:20px;height:21px;border:1.5px solid #6a6e72;border-radius:3px"></div>
<div class="a" style="left:1468px;top:821px;width:22px;height:22px;border:2px solid #3ab0cc"></div>
<div class="a" style="left:1492px;top:821px;width:22px;height:22px;border:2px solid #3ab0cc"></div>
</body></html>
